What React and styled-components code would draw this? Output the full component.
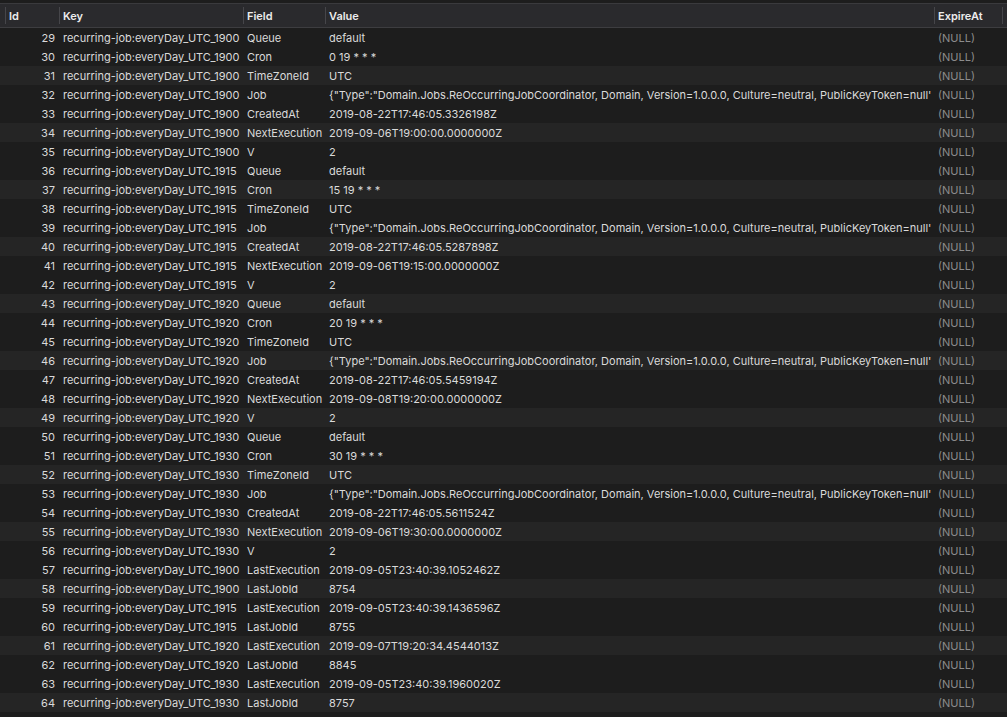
import React from "react";
import styled, { createGlobalStyle } from "styled-components";

const GlobalStyle = createGlobalStyle`
  html, body {
    margin: 0;
    padding: 0;
    background: #1d1d1d;
  }
  body {
    font-family: Inter, "Liberation Sans", sans-serif;
    -webkit-font-smoothing: antialiased;
  }
`;

// the grid only shows the start of the serialized job, clipped by the column
const JOB_JSON =
  '{"Type":"Domain.Jobs.ReOccurringJobCoordinator, Domain, Version=1.0.0.0, Culture=neutral, PublicKeyToken=null\'';

const KEY = (t) => `recurring-job:everyDay_UTC_${t}`;

const jobRows = (t, cron, created, next) => [
  ["Queue", "default"],
  ["Cron", cron],
  ["TimeZoneId", "UTC"],
  ["Job", JOB_JSON],
  ["CreatedAt", created],
  ["NextExecution", next],
  ["V", "2"],
].map(([field, value]) => ({ key: KEY(t), field, value }));

const rows = [
  ...jobRows("1900", "0 19 * * *", "2019-08-22T17:46:05.3326198Z", "2019-09-06T19:00:00.0000000Z"),
  ...jobRows("1915", "15 19 * * *", "2019-08-22T17:46:05.5287898Z", "2019-09-06T19:15:00.0000000Z"),
  ...jobRows("1920", "20 19 * * *", "2019-08-22T17:46:05.5459194Z", "2019-09-08T19:20:00.0000000Z"),
  ...jobRows("1930", "30 19 * * *", "2019-08-22T17:46:05.5611524Z", "2019-09-06T19:30:00.0000000Z"),
  { key: KEY("1900"), field: "LastExecution", value: "2019-09-05T23:40:39.1052462Z" },
  { key: KEY("1900"), field: "LastJobId", value: "8754" },
  { key: KEY("1915"), field: "LastExecution", value: "2019-09-05T23:40:39.1436596Z" },
  { key: KEY("1915"), field: "LastJobId", value: "8755" },
  { key: KEY("1920"), field: "LastExecution", value: "2019-09-07T19:20:34.4544013Z" },
  { key: KEY("1920"), field: "LastJobId", value: "8845" },
  { key: KEY("1930"), field: "LastExecution", value: "2019-09-05T23:40:39.1960020Z" },
  { key: KEY("1930"), field: "LastJobId", value: "8757" },
].map((r, i) => ({ id: 29 + i, ...r }));

const COLUMNS = "54px 184px 82px 609px 68px 1fr";

// Layout
const Page = styled.div`
  width: 1007px;
  height: 717px;
  overflow: hidden;
  background: #1d1d1d;
  padding-top: 3px;
  box-sizing: border-box;
`;

const HeaderRow = styled.div`
  display: grid;
  grid-template-columns: ${COLUMNS};
  padding-left: 5px;
  height: 23px;
  background: #2a2a2d;
  border-top: 1px solid #3a3a3d;
  border-bottom: 1px solid #3d3d40;
`;

const HeaderCell = styled.div`
  display: flex;
  align-items: center;
  padding-left: 3px;
  border-left: 1px solid #46464a;
  margin: 3px 0;
  font-size: 11px;
  font-weight: 600;
  color: #ececec;
  white-space: nowrap;
  overflow: hidden;
`;

const Row = styled.div`
  display: grid;
  grid-template-columns: ${COLUMNS};
  padding-left: 5px;
  height: 19px;
  background: ${(p) => (p.$light ? "#252525" : "#1d1d1d")};
`;

const Cell = styled.div`
  display: flex;
  align-items: center;
  justify-content: ${(p) => (p.$right ? "flex-end" : "flex-start")};
  padding: ${(p) => (p.$right ? "0 4px 0 0" : "0 0 0 4px")};
  font-size: 11px;
  color: ${(p) => (p.$muted ? "#8c8c8c" : "#dadada")};
  white-space: nowrap;
  overflow: hidden;
`;

const App = () => (
  <>
    <GlobalStyle />
    <Page>
      <HeaderRow>
        <HeaderCell>Id</HeaderCell>
        <HeaderCell>Key</HeaderCell>
        <HeaderCell>Field</HeaderCell>
        <HeaderCell>Value</HeaderCell>
        <HeaderCell>ExpireAt</HeaderCell>
        <HeaderCell />
      </HeaderRow>
      {rows.map((r) => (
        <Row key={r.id} $light={(r.id - 31) % 3 === 0}>
          <Cell $right>{r.id}</Cell>
          <Cell>{r.key}</Cell>
          <Cell>{r.field}</Cell>
          <Cell>{r.value}</Cell>
          <Cell $muted>(NULL)</Cell>
          <Cell />
        </Row>
      ))}
    </Page>
  </>
);

export default App;
